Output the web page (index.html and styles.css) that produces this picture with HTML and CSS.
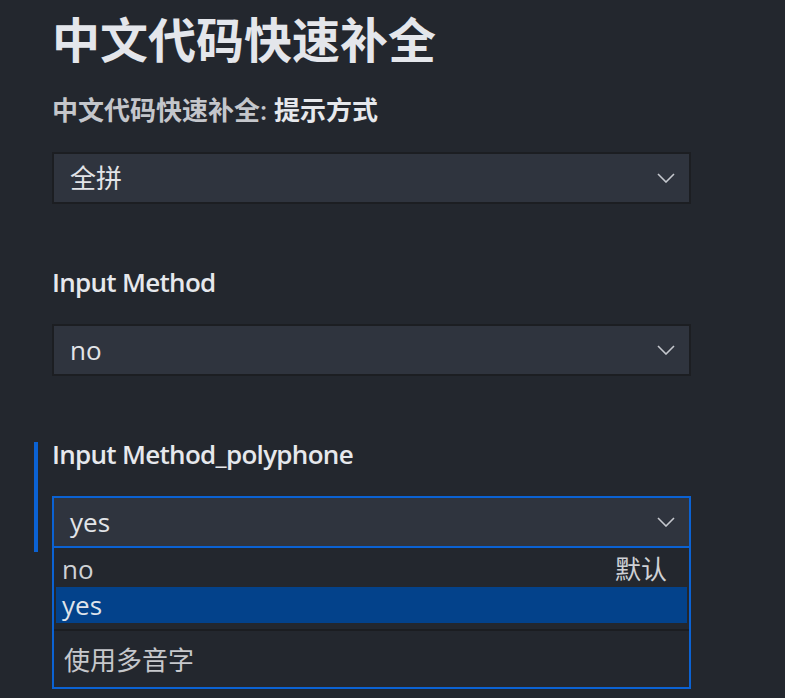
FILE: index.html
```html
<!DOCTYPE html>
<html lang="zh-CN">
<head>
<meta charset="utf-8">
<title>中文代码快速补全</title>
<link rel="stylesheet" href="styles.css">
</head>
<body>
<main class="page">
  <h1 class="title">中文代码快速补全</h1>
  <div class="settings">
    <section class="item">
      <div class="bar"></div>
      <div class="content">
        <div class="label"><span class="category">中文代码快速补全: </span>提示方式</div>
        <div class="select">
          <span class="value">全拼</span>
          <svg class="chev" width="18" height="10" viewBox="0 0 18 10"><polyline points="1,1 9,9 17,1" fill="none" stroke="#c5c8ce" stroke-width="1.6"/></svg>
        </div>
      </div>
    </section>
    <section class="item">
      <div class="bar"></div>
      <div class="content">
        <div class="label en">Input Method</div>
        <div class="select">
          <span class="value">no</span>
          <svg class="chev" width="18" height="10" viewBox="0 0 18 10"><polyline points="1,1 9,9 17,1" fill="none" stroke="#c5c8ce" stroke-width="1.6"/></svg>
        </div>
      </div>
    </section>
    <section class="item focused">
      <div class="bar"></div>
      <div class="content">
        <div class="label en">Input Method_polyphone</div>
        <div class="select open">
          <span class="value">yes</span>
          <svg class="chev" width="18" height="10" viewBox="0 0 18 10"><polyline points="1,1 9,9 17,1" fill="none" stroke="#c5c8ce" stroke-width="1.6"/></svg>
          <div class="dropdown">
            <ul class="options">
              <li class="option"><span>no</span><span class="default">默认</span></li>
              <li class="option selected"><span>yes</span></li>
            </ul>
            <div class="desc">使用多音字</div>
          </div>
        </div>
      </div>
    </section>
  </div>
</main>
</body>
</html>
```

FILE: styles.css
```css
html, body {
  margin: 0;
  padding: 0;
  background: #23272e;
}
body {
  font-family: "Open Sans", "Noto Sans CJK SC", sans-serif;
  color: #e2e4e8;
  min-height: 698px;
}
.page {
  display: flex;
  flex-direction: column;
  padding-left: 34px;
  width: 657px;
}
.title {
  margin: 0 0 0 18px;
  font-size: 48px;
  line-height: 80px;
  font-weight: 700;
  color: #e4e6eb;
}
.settings {
  display: flex;
  flex-direction: column;
  gap: 56px;
  margin-top: 12px;
}
.item {
  display: flex;
}
.bar {
  width: 4px;
  margin-right: 14px;
  margin-top: 6px;
  flex: none;
}
.item.focused .bar {
  background: #0b62d3;
}
.content {
  flex: 1;
  padding-bottom: 4px;
}
.label {
  font-size: 26px;
  line-height: 36px;
  font-weight: 600;
  color: #e6e8ec;
}
.label.en {
  letter-spacing: -0.7px;
}
.category {
  color: #c4c6cb;
}
.select {
  position: relative;
  margin-top: 24px;
  height: 52px;
  box-sizing: border-box;
  border: 2px solid #1c1e22;
  background: #2f343e;
  display: flex;
  align-items: center;
  justify-content: space-between;
  padding: 0 14px 0 16px;
  font-size: 26px;
  line-height: 48px;
  color: #e2e4e8;
}
.select.open {
  border-color: #0b62d3;
}
.chev {
  display: block;
}
.dropdown {
  position: absolute;
  top: 100%;
  left: -2px;
  right: -2px;
  z-index: 5;
  border: 2px solid #0b62d3;
  background: #23272e;
  color: #cfd1d5;
}
.options {
  list-style: none;
  margin: 0;
  padding: 3px 2px 2px;
}
.option {
  display: flex;
  justify-content: space-between;
  height: 36px;
  line-height: 36px;
  padding: 0 20px 0 6px;
}
.option.selected {
  background: #03428b;
  color: #dfe3ea;
}
.desc {
  margin-top: 4px;
  border-top: 2px solid #1b1d21;
  padding: 11px 10px 9px;
  line-height: 36px;
  color: #c6c8cc;
}
```
